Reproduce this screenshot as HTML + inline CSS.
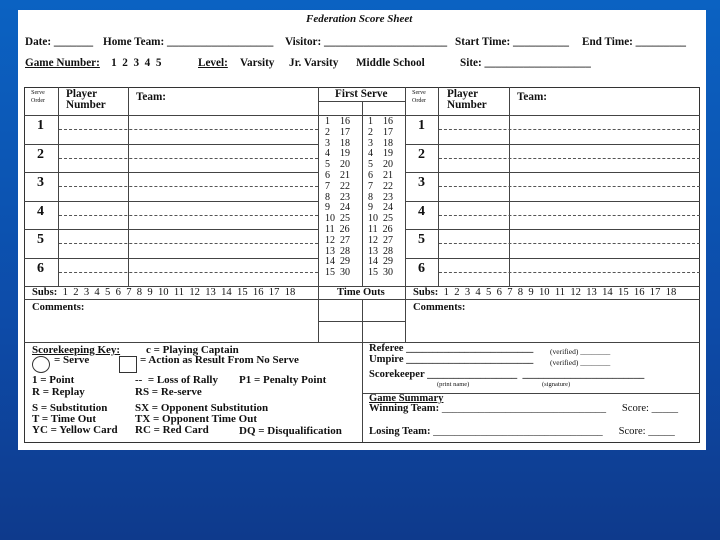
<!DOCTYPE html>
<html><head><style>
*{margin:0;padding:0;box-sizing:border-box}
body{width:720px;height:540px;overflow:hidden;background:linear-gradient(#0b62c2,#0d4ba8 60%,#0e3a8c);font-family:"Liberation Serif",serif;position:relative}
.sheet{position:absolute;left:18px;top:10px;width:688px;height:440px;background:#fff}
.a{position:absolute;color:#111;white-space:nowrap}
.b{font-weight:bold}
.hl{position:absolute;height:1px;background:#444}
.vl{position:absolute;width:1px;background:#444}
.dl{position:absolute;height:0;border-top:1px dashed #555}
.s9{font-size:10.6px}.s10{font-size:11.2px}.s6{font-size:6px}
.k{font-size:11px}
u{text-decoration:underline}
</style></head><body>
<div class="sheet"></div>
<div class="a b" style="left:306px;top:13px;font-style:italic;font-size:11px">Federation Score Sheet</div>
<div class="a b s10" style="left:25px;top:36px">Date: _______</div>
<div class="a b s10" style="left:103px;top:36px">Home Team: ___________________</div>
<div class="a b s10" style="left:285px;top:36px">Visitor: ______________________</div>
<div class="a b s10" style="left:455px;top:36px">Start Time: __________</div>
<div class="a b s10" style="left:582px;top:36px">End Time: _________</div>
<div class="a b s10" style="left:25px;top:57px"><u>Game Number:</u> &nbsp;&nbsp; 1 &nbsp;2 &nbsp;3 &nbsp;4 &nbsp;5</div>
<div class="a b s10" style="left:198px;top:57px"><u>Level:</u></div>
<div class="a b s10" style="left:240px;top:57px">Varsity</div>
<div class="a b s10" style="left:289px;top:57px">Jr. Varsity</div>
<div class="a b s10" style="left:356px;top:57px">Middle School</div>
<div class="a b s10" style="left:460px;top:57px">Site: ___________________</div>

<div style="position:absolute;left:24px;top:87px;width:676px;height:356px;border:1px solid #333"></div>
<div class="hl" style="left:24px;top:115px;width:676px"></div>
<div class="hl" style="left:318px;top:101px;width:87px"></div>
<div class="hl" style="left:24px;top:286px;width:676px"></div>
<div class="hl" style="left:24px;top:299px;width:676px"></div>
<div class="hl" style="left:24px;top:342px;width:676px"></div>
<div class="hl" style="left:318px;top:321px;width:87px"></div>
<div class="hl" style="left:362px;top:393px;width:338px"></div>
<div class="vl" style="left:58px;top:87px;height:199px"></div>
<div class="vl" style="left:128px;top:87px;height:199px"></div>
<div class="vl" style="left:318px;top:87px;height:255px"></div>
<div class="vl" style="left:362px;top:101px;height:185px"></div>
<div class="vl" style="left:362px;top:299px;height:143px"></div>
<div class="vl" style="left:405px;top:87px;height:255px"></div>
<div class="vl" style="left:438px;top:87px;height:199px"></div>
<div class="vl" style="left:509px;top:87px;height:199px"></div>

<div class="a s6" style="left:31px;top:89px;line-height:8px;text-align:center">Serve<br>Order</div>
<div class="a b s10" style="left:66px;top:89px;line-height:11px">Player<br>Number</div>
<div class="a b s10" style="left:136px;top:91px">Team:</div>
<div class="a b s10" style="left:335px;top:88px">First Serve</div>
<div class="a s6" style="left:412px;top:89px;line-height:8px;text-align:center">Serve<br>Order</div>
<div class="a b s10" style="left:447px;top:89px;line-height:11px">Player<br>Number</div>
<div class="a b s10" style="left:517px;top:91px">Team:</div>

<div id="rows"></div>
<div class="a s9" style="left:325px;top:117px;line-height:10.8px;white-space:pre;font-size:10px">1    16
2    17
3    18
4    19
5    20
6    21
7    22
8    23
9    24
10  25
11  26
12  27
13  28
14  29
15  30</div>
<div class="a s9" style="left:368px;top:117px;line-height:10.8px;white-space:pre;font-size:10px">1    16
2    17
3    18
4    19
5    20
6    21
7    22
8    23
9    24
10  25
11  26
12  27
13  28
14  29
15  30</div>

<div class="a s9" style="left:32px;top:287px"><b>Subs:</b> &nbsp;1 &nbsp;2 &nbsp;3 &nbsp;4 &nbsp;5 &nbsp;6 &nbsp;7 &nbsp;8 &nbsp;9 &nbsp;10 &nbsp;11 &nbsp;12 &nbsp;13 &nbsp;14 &nbsp;15 &nbsp;16 &nbsp;17 &nbsp;18</div>
<div class="a b s9" style="left:337px;top:287px">Time Outs</div>
<div class="a s9" style="left:413px;top:287px"><b>Subs:</b> &nbsp;1 &nbsp;2 &nbsp;3 &nbsp;4 &nbsp;5 &nbsp;6 &nbsp;7 &nbsp;8 &nbsp;9 &nbsp;10 &nbsp;11 &nbsp;12 &nbsp;13 &nbsp;14 &nbsp;15 &nbsp;16 &nbsp;17 &nbsp;18</div>
<div class="a b s9" style="left:32px;top:302px">Comments:</div>
<div class="a b s9" style="left:413px;top:302px">Comments:</div>

<div class="a b k" style="left:32px;top:344px"><u>Scorekeeping Key:</u></div>
<div class="a b k" style="left:146px;top:344px">c = Playing Captain</div>
<div style="position:absolute;left:32px;top:356px;width:18px;height:17px;border:1px solid #333;border-radius:50%"></div>
<div class="a b k" style="left:54px;top:354px">= Serve</div>
<div style="position:absolute;left:119px;top:356px;width:18px;height:17px;border:1px solid #333"></div>
<div class="a b k" style="left:140px;top:354px">= Action as Result From No Serve</div>
<div class="a b k" style="left:32px;top:374px;line-height:12px">1 = Point<br>R = Replay</div>
<div class="a b k" style="left:135px;top:374px;line-height:12px">-- &nbsp;= Loss of Rally<br>RS = Re-serve</div>
<div class="a b k" style="left:239px;top:374px">P1 = Penalty Point</div>
<div class="a b k" style="left:32px;top:403px;line-height:11px">S = Substitution<br>T = Time Out<br>YC = Yellow Card</div>
<div class="a b k" style="left:135px;top:403px;line-height:11px">SX = Opponent Substitution<br>TX = Opponent Time Out<br>RC = Red Card</div>
<div class="a b k" style="left:239px;top:425px">DQ = Disqualification</div>

<div class="a b s9" style="left:369px;top:344px;line-height:10.5px">Referee ________________________<br>Umpire ________________________</div>
<div class="a" style="left:550px;top:347px;line-height:10.5px;font-size:7.5px">(verified) ________<br>(verified) ________</div>
<div class="a b s9" style="left:369px;top:369px">Scorekeeper _________________ &nbsp;_______________________</div>
<div class="a" style="left:437px;top:381px;font-size:6.5px">(print name)</div>
<div class="a" style="left:542px;top:381px;font-size:6.5px">(signature)</div>
<div class="a b s9" style="left:369px;top:394px;line-height:10px"><u>Game Summary</u><br>Winning Team: <span style="font-weight:normal">_______________________________ &nbsp;&nbsp;&nbsp;&nbsp; Score: _____</span></div>
<div class="a b s9" style="left:369px;top:426px">Losing Team: <span style="font-weight:normal">________________________________ &nbsp;&nbsp;&nbsp;&nbsp; Score: _____</span></div>

<script>
var h='';
for(var i=0;i<6;i++){
 var t=115+i*28.5;
 if(i>0){h+='<div class="hl" style="left:24px;top:'+t+'px;width:294px"></div><div class="hl" style="left:405px;top:'+t+'px;width:295px"></div>';}
 var d=t+14;
 h+='<div class="dl" style="left:59px;top:'+d+'px;width:259px"></div><div class="dl" style="left:439px;top:'+d+'px;width:261px"></div>';
 h+='<div class="a b" style="left:37px;top:'+(t+3)+'px;font-size:14px">'+(i+1)+'</div><div class="a b" style="left:418px;top:'+(t+3)+'px;font-size:14px">'+(i+1)+'</div>';
}
document.getElementById('rows').innerHTML=h;
</script>
</body></html>
